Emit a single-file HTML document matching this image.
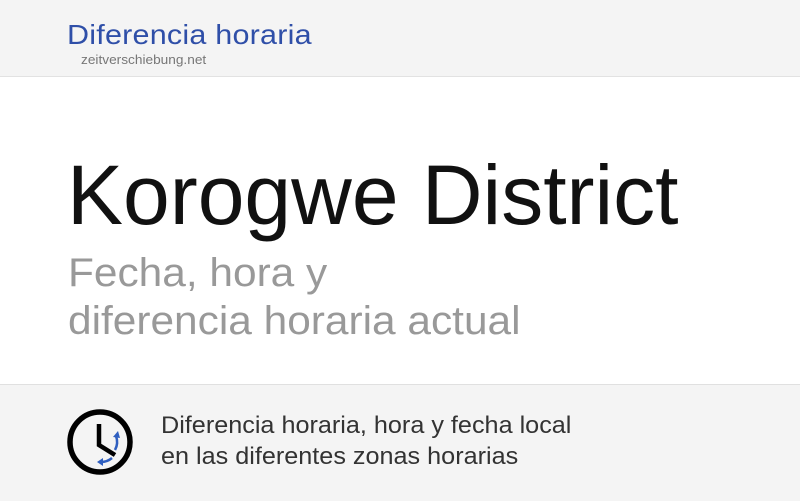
<!DOCTYPE html>
<html><head><meta charset="utf-8"><style>
body{margin:0;width:800px;height:500px;overflow:hidden;background:#fff;font-family:"Liberation Sans",sans-serif;position:relative}
.hd{position:absolute;left:0;top:0;width:800px;height:76px;background:#f4f4f4;border-bottom:1px solid #e2e2e2}
.logo{position:absolute;left:67px;top:19px;font-size:28px;color:#2f4fa8;letter-spacing:0.2px;transform-origin:left top;transform:scaleX(1.09);white-space:nowrap}
.sub{position:absolute;left:81px;top:52px;font-size:13px;color:#777;transform-origin:left top;transform:scaleX(1.05);white-space:nowrap}
.t{position:absolute;left:67px;top:147px;font-size:84px;color:#111;white-space:nowrap}
.s{position:absolute;left:68px;top:249px;font-size:40px;color:#999;line-height:48px;transform-origin:left top;transform:scaleX(1.06);white-space:nowrap}
.ft{position:absolute;left:0;top:384px;width:800px;height:116px;background:#f4f4f4;border-top:1px solid #e0e0e0}
.ftx{position:absolute;left:161px;top:410px;font-size:24px;line-height:31px;color:#333;transform-origin:left top;transform:scaleX(1.05);white-space:nowrap}
</style></head><body>
<div class="hd"><div class="logo">Diferencia horaria</div><div class="sub">zeitverschiebung.net</div></div>
<div class="t">Korogwe District</div>
<div class="s">Fecha, hora y<br>diferencia horaria actual</div>
<div class="ft"></div>
<svg style="position:absolute;left:60px;top:402px" width="80" height="80" viewBox="0 0 80 80">
<circle cx="40" cy="40" r="30" fill="none" stroke="#000" stroke-width="5.5"/>
<polyline points="39,22 39,43 55,53" fill="none" stroke="#000" stroke-width="4.5"/>
<path d="M56 34 A17 17 0 0 1 55 48" fill="none" stroke="#2f5fc0" stroke-width="2.5"/>
<polygon points="53,35 58,29 60,36" fill="#2f5fc0"/>
<path d="M52 56 A17 17 0 0 1 41 60" fill="none" stroke="#2f5fc0" stroke-width="2.5"/>
<polygon points="43,56 37,60 43,64" fill="#2f5fc0"/>
</svg>
<div class="ftx">Diferencia horaria, hora y fecha local<br>en las diferentes zonas horarias</div>
</body></html>
